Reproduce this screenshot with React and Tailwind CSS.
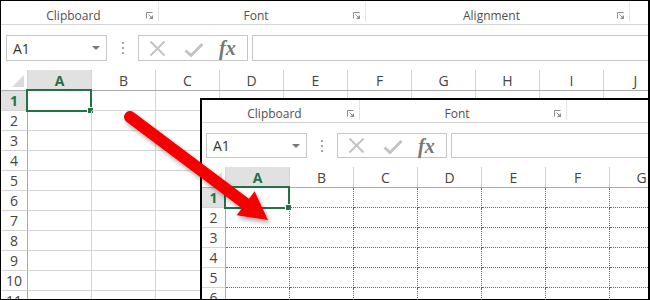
const COLS = ["A", "B", "C", "D", "E", "F", "G", "H", "I", "J"];

function Launcher() {
  return (
    <svg width="7" height="7" viewBox="0 0 7 7" className="shrink-0">
      <path d="M0.5 6.5V0.5H6.5" fill="none" stroke="#8c8c8c" strokeWidth="1" />
      <path d="M2.5 2.5L5.5 5.5" stroke="#8c8c8c" strokeWidth="1" />
      <path d="M7 3V7H3Z" fill="#8c8c8c" />
    </svg>
  );
}

function Group({ label, className }) {
  return (
    <div className={`flex h-full shrink-0 ${className}`}>
      <div className="flex flex-1 items-end justify-center text-[12px] leading-4 text-[#505050]">{label}</div>
      <div className="flex items-end pb-[5px]">
        <Launcher />
      </div>
      <div className="ml-[5px] h-[20px] w-px bg-[#e3e3e3]" />
    </div>
  );
}

function FormulaBar({ inner }) {
  return (
    <div className={`mt-[10px] flex shrink-0 ${inner ? "h-[25px]" : "h-[26px]"}`}>
      <div
        className={`flex w-[101px] shrink-0 items-center justify-between border border-[#c6c6c6] pl-[6px] pr-[6px] text-[14px] text-[#333] ${
          inner ? "ml-[4px]" : "ml-[5px]"
        }`}
      >
        <span>A1</span>
        <svg width="8" height="4" viewBox="0 0 8 4">
          <path d="M0 0H8L4 4Z" fill="#777" />
        </svg>
      </div>
      <div className={`flex shrink-0 flex-col items-center justify-center gap-[3px] ${inner ? "w-[30px]" : "w-[31px]"}`}>
        <div className="h-[2px] w-[2px] bg-[#a6a6a6]" />
        <div className="h-[2px] w-[2px] bg-[#a6a6a6]" />
        <div className="h-[2px] w-[2px] bg-[#a6a6a6]" />
      </div>
      <div className="flex w-[110px] shrink-0 items-center border border-[#c6c6c6]">
        <svg width="17" height="17" viewBox="0 0 17 17" className="ml-[10px]">
          <path d="M1.5 1.5L15.5 15.5M15.5 1.5L1.5 15.5" stroke="#c3c3c3" strokeWidth="2" />
        </svg>
        <svg width="20" height="16" viewBox="0 0 20 16" className="ml-[18px] mt-[3px]">
          <path d="M1.5 8.5L7 13.5L18.5 2" fill="none" stroke="#c3c3c3" strokeWidth="3" />
        </svg>
        <span className="ml-[15px] font-['Liberation_Serif',serif] text-[20px] font-semibold italic leading-none text-[#777]">
          fx
        </span>
      </div>
      <div className="ml-[4px] w-[700px] shrink-0 border border-r-0 border-[#c6c6c6]" />
    </div>
  );
}

function Sheet({ inner }) {
  const rows = inner ? [1, 2, 3, 4, 5, 6] : [1, 2, 3, 4, 5, 6, 7, 8, 9, 10, 11];
  const cols = inner ? COLS.slice(0, 8) : COLS;
  const corner = inner ? "w-[24px]" : "w-[27px]";
  const cell = inner
    ? "border-dotted border-r-[#ff00ff] border-b-[#ff00ff]"
    : "border-solid border-r-[#d4d4d4] border-b-[#d4d4d4]";

  return (
    <div className="flex flex-col bg-white font-['Open_Sans',sans-serif]">
      <div className={`flex shrink-0 border-b border-[#d4d4d4] ${inner ? "h-[23px]" : "h-[24px]"}`}>
        <Group label="Clipboard" className="w-[158px]" />
        <Group label="Font" className="w-[207px]" />
        <Group label="Alignment" className="w-[264px]" />
      </div>

      <FormulaBar inner={inner} />

      <div className="mt-[9px] flex h-[21px] shrink-0 border-b border-[#ababab]">
        <div className={`flex shrink-0 items-end justify-end border-r border-[#d4d4d4] pb-[3px] pr-[3px] ${corner}`}>
          <svg width="12" height="12" viewBox="0 0 12 12">
            <path d="M12 0V12H0Z" fill="#dadada" />
          </svg>
        </div>
        {cols.map((c) => (
          <div
            key={c}
            className={`flex w-[64px] shrink-0 items-center justify-center border-r border-[#d4d4d4] text-[14px] ${
              c === "A" ? "bg-[#e1e1e1] font-bold text-[#217346]" : "text-[#444]"
            }`}
          >
            {c}
          </div>
        ))}
      </div>

      {rows.map((r) => (
        <div key={r} className="flex h-[20px] shrink-0">
          <div
            className={`flex shrink-0 items-center justify-center border-b border-r border-b-[#d4d4d4] border-r-[#ababab] text-[14px] ${corner} ${
              r === 1 ? "bg-[#e1e1e1] font-bold text-[#217346]" : "text-[#444]"
            }`}
          >
            {r}
          </div>
          {cols.map((c) => (
            <div key={c} className={`relative w-[64px] shrink-0 border-b border-r ${cell}`}>
              {r === 1 && c === "A" && (
                <div className="absolute -left-[2px] -top-[2px] h-[23px] w-[66px] border-2 border-[#217346]">
                  <div className="absolute -bottom-[4px] -right-[4px] h-[7px] w-[7px] border border-white bg-[#217346]" />
                </div>
              )}
            </div>
          ))}
        </div>
      ))}
    </div>
  );
}

export default function App() {
  return (
    <div className="relative h-[300px] w-[650px] overflow-hidden border border-r-2 border-black bg-white">
      <Sheet />

      {/* second screenshot laid over the first */}
      <div className="absolute left-[199px] top-[97px] h-[220px] w-[470px] overflow-hidden border-l-2 border-t-2 border-black">
        <Sheet inner />
      </div>

      <svg
        className="pointer-events-none absolute left-0 top-0"
        width="648"
        height="298"
        viewBox="1 1 648 298"
      >
        <defs>
          <filter id="arrowShadow" x="-20%" y="-20%" width="140%" height="140%">
            <feDropShadow dx="2" dy="3" stdDeviation="2" floodColor="#000" floodOpacity="0.35" />
          </filter>
        </defs>
        <g filter="url(#arrowShadow)">
          <line x1="130" y1="117" x2="246" y2="204" stroke="#f40000" strokeWidth="12" strokeLinecap="round" />
          <polygon points="254.6,191.3 236.6,215.3 268,220" fill="#f40000" />
        </g>
      </svg>
    </div>
  );
}
